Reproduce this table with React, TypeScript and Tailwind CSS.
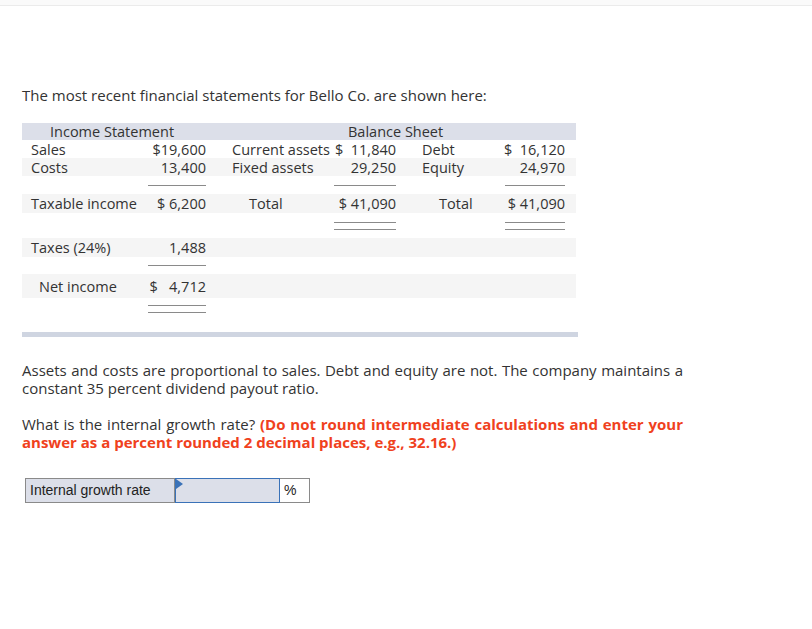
import { ReactNode } from 'react'

const font = { fontFamily: '"Open Sans", "Liberation Sans", sans-serif' }

function Line({ className = '' }: { className?: string }) {
  return <div className={`border-t border-[#8a8a8a] ${className}`} />
}

function Cell({ children, className = '' }: { children?: ReactNode; className?: string }) {
  return <td className={`p-0 align-middle whitespace-nowrap ${className}`}>{children}</td>
}

export default function App() {
  return (
    <div className="min-h-screen bg-white text-[#333]" style={font}>
      <div className="h-[6px] bg-[#fafafa] border-b border-[#ebebeb]" />
      <div className="px-[22px]">
        <p className="mt-[79px] text-[15px] leading-[20px]">
          The most recent financial statements for Bello Co. are shown here:
        </p>

        <table className="mt-[18px] table-fixed border-collapse w-[554px] text-[14.5px] leading-[17px]">
          <colgroup>
            <col className="w-[118px]" />
            <col className="w-[74px]" />
            <col className="w-[120px]" />
            <col className="w-[70px]" />
            <col className="w-[93px]" />
            <col className="w-[79px]" />
          </colgroup>
          <tbody>
            <tr className="h-[17px] bg-[#dcdfe9]">
              <Cell className="pl-[28px]">Income Statement</Cell>
              <Cell />
              <Cell className="pl-[134px]">Balance Sheet</Cell>
              <Cell />
              <Cell />
              <Cell />
            </tr>
            <tr className="h-[18px]">
              <Cell className="pl-[9px]">Sales</Cell>
              <Cell className="text-right pr-2">$19,600</Cell>
              <Cell className="pl-[18px]">Current assets</Cell>
              <Cell className="text-right pr-2">$&nbsp;&nbsp;11,840</Cell>
              <Cell className="pl-[18px]">Debt</Cell>
              <Cell className="text-right pr-[11px]">$&nbsp;&nbsp;16,120</Cell>
            </tr>
            <tr className="h-[18px] bg-[#f5f5f5]">
              <Cell className="pl-[9px]">Costs</Cell>
              <Cell className="text-right pr-2">13,400</Cell>
              <Cell className="pl-[18px]">Fixed assets</Cell>
              <Cell className="text-right pr-2">29,250</Cell>
              <Cell className="pl-[18px]">Equity</Cell>
              <Cell className="text-right pr-[11px]">24,970</Cell>
            </tr>
            <tr className="h-[18px]">
              <Cell />
              <Cell><Line className="mx-2" /></Cell>
              <Cell />
              <Cell><Line className="mr-2" /></Cell>
              <Cell />
              <Cell><Line className="ml-2 mr-[11px]" /></Cell>
            </tr>
            <tr className="h-[19px] bg-[#f5f5f5]">
              <Cell className="pl-[9px]">Taxable income</Cell>
              <Cell className="text-right pr-2">$ 6,200</Cell>
              <Cell className="pl-[35px]">Total</Cell>
              <Cell className="text-right pr-2">$ 41,090</Cell>
              <Cell className="pl-[35px]">Total</Cell>
              <Cell className="text-right pr-[11px]">$ 41,090</Cell>
            </tr>
            <tr className="h-[25px]">
              <Cell />
              <Cell />
              <Cell />
              <Cell>
                <Line className="mr-2" />
                <Line className="mr-2 mt-[6px]" />
              </Cell>
              <Cell />
              <Cell>
                <Line className="ml-2 mr-[11px]" />
                <Line className="ml-2 mr-[11px] mt-[6px]" />
              </Cell>
            </tr>
            <tr className="h-[19px] bg-[#f5f5f5]">
              <Cell className="pl-[9px]">Taxes (24%)</Cell>
              <Cell className="text-right pr-2">1,488</Cell>
              <Cell />
              <Cell />
              <Cell />
              <Cell />
            </tr>
            <tr className="h-[17px]">
              <Cell />
              <Cell><Line className="mx-2" /></Cell>
              <Cell />
              <Cell />
              <Cell />
              <Cell />
            </tr>
            <tr className="h-[24px] bg-[#f5f5f5]">
              <Cell className="pl-[17px]">Net income</Cell>
              <Cell className="text-right pr-2">$&nbsp;&nbsp;&nbsp;4,712</Cell>
              <Cell />
              <Cell />
              <Cell />
              <Cell />
            </tr>
            <tr className="h-[22px]">
              <Cell />
              <Cell>
                <Line className="mx-2" />
                <Line className="mx-2 mt-[6px]" />
              </Cell>
              <Cell />
              <Cell />
              <Cell />
              <Cell />
            </tr>
          </tbody>
        </table>

        <div className="mt-[12px] h-[5px] w-[556px] bg-[#cfd5e1]" />

        <div className="w-[661px] text-[15px] leading-[18px] text-justify">
          <p className="mt-[24px]">
            Assets and costs are proportional to sales. Debt and equity are not. The company maintains a
            constant 35 percent dividend payout ratio.
          </p>
          <p className="mt-[18px]">
            What is the internal growth rate?{' '}
            <strong className="font-bold text-[#f0411d]">
              (Do not round intermediate calculations and enter your answer as a percent rounded 2 decimal
              places, e.g., 32.16.)
            </strong>
          </p>
        </div>

        <div
          className="mt-[27px] ml-[3px] flex h-[25px] text-[14px] text-[#222]"
          style={{ fontFamily: '"Liberation Sans", Arial, sans-serif' }}
        >
          <div className="w-[150px] flex items-center pl-[4px] bg-[#dcdfe9] border border-[#8a8a8a]">
            Internal growth rate
          </div>
          <div className="relative w-[105px] bg-[#dcdfe9] border border-[#3a72b8]">
            <div className="absolute left-0 top-0 w-0 h-0 border-t-[5px] border-b-[5px] border-l-[7px] border-t-transparent border-b-transparent border-l-[#3a72b8]" />
          </div>
          <div className="w-[30px] flex items-center pl-[4px] bg-white border border-[#8a8a8a] border-l-0">
            %
          </div>
        </div>
      </div>
    </div>
  )
}
